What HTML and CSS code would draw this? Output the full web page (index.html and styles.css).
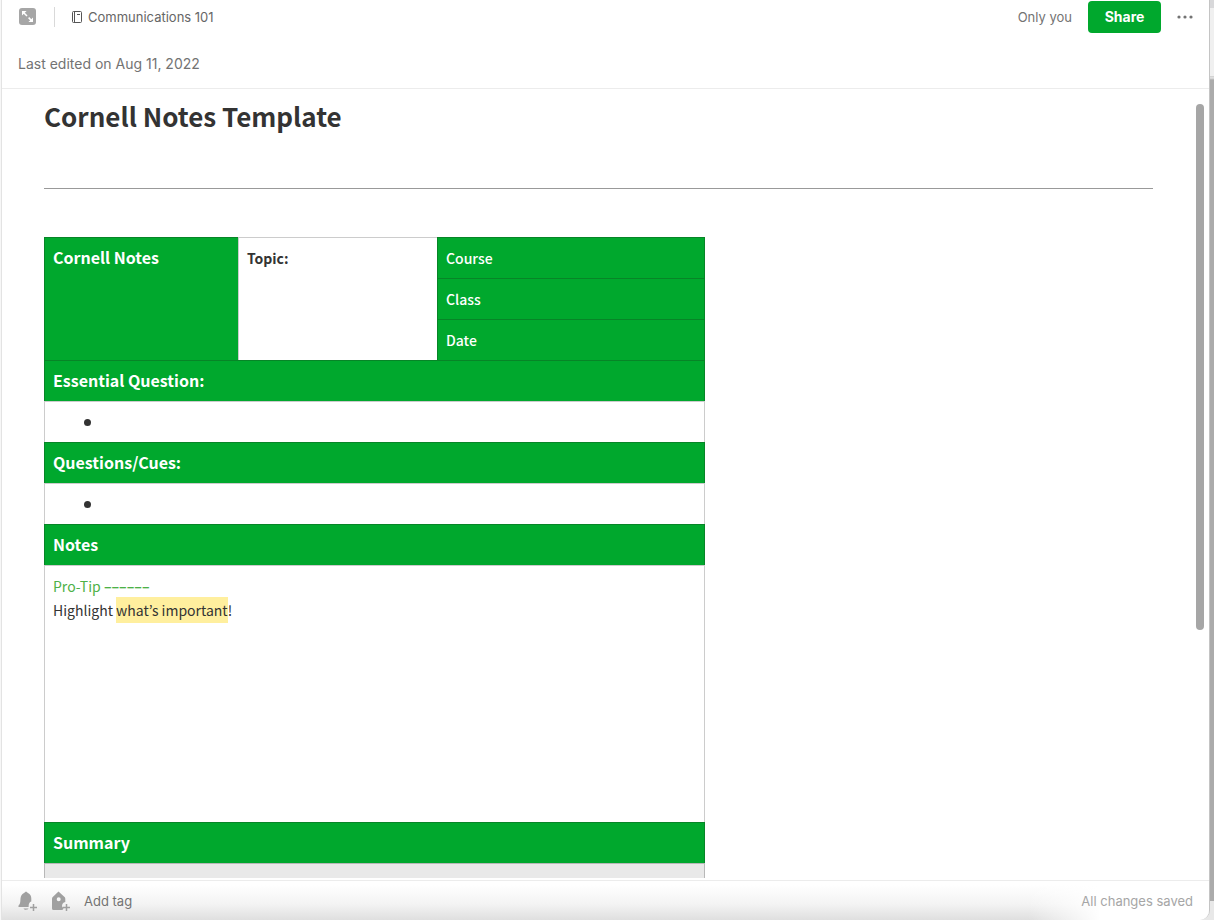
FILE: index.html
```html
<!DOCTYPE html>
<html lang="en">
  <head>
    <meta charset="UTF-8" />
    <meta name="viewport" content="width=device-width, initial-scale=1.0" />
    <title>Cornell Notes Template</title>
    <link rel="stylesheet" href="styles.css">
  </head>
  <body>
    <div class="note-window">
      <header class="topbar">
        <button class="icon-btn" aria-label="Expand note">
          <svg width="17" height="18" viewBox="0 0 17 18">
            <rect width="17" height="17" rx="3" fill="#a6a6a6" />
            <path d="M3 3h4.6L3 7.6z M14 14H9.4L14 9.4z" fill="#fff" />
            <path d="M4.5 4.5l3.5 3.5M9.6 9.6l3 3" stroke="#fff" stroke-width="1.5" />
          </svg>
        </button>
        <span class="divider"></span>
        <a class="notebook" href="#">
          <svg width="11" height="12" viewBox="0 0 11 12" fill="none" stroke="#555">
            <rect x="0.5" y="0.5" width="9" height="11" rx="1" />
            <path d="M2.5 0.5v11M5 3.5h3" />
          </svg>
          Communications 101
        </a>
        <span class="shared">Only you</span>
        <button class="share-btn">Share</button>
        <button class="icon-btn" aria-label="More actions">
          <svg width="16" height="4" viewBox="0 0 16 4" fill="#737373">
            <circle cx="2" cy="2" r="1.6" />
            <circle cx="8" cy="2" r="1.6" />
            <circle cx="14" cy="2" r="1.6" />
          </svg>
        </button>
      </header>

      <div class="edited">Last edited on Aug 11, 2022</div>

      <div class="editor">
        <main class="note">
          <h1>Cornell Notes Template</h1>
          <hr />
          <table>
            <colgroup>
              <col class="col-title" />
              <col class="col-topic" />
              <col class="col-info" />
            </colgroup>
            <tr>
              <th rowspan="3">Cornell Notes</th>
              <td rowspan="3" class="topic">Topic:</td>
              <td class="green last">Course</td>
            </tr>
            <tr>
              <td class="green last">Class</td>
            </tr>
            <tr>
              <td class="green last">Date</td>
            </tr>
            <tr>
              <th colspan="3" class="last">Essential Question:</th>
            </tr>
            <tr>
              <td colspan="3" class="last"><ul><li></li></ul></td>
            </tr>
            <tr>
              <th colspan="3" class="last">Questions/Cues:</th>
            </tr>
            <tr>
              <td colspan="3" class="last"><ul><li></li></ul></td>
            </tr>
            <tr>
              <th colspan="3" class="last">Notes</th>
            </tr>
            <tr>
              <td colspan="3" class="last notes-cell">
                <p class="tip">Pro-Tip <b>––––––</b></p>
                <p>Highlight <mark>what’s important</mark>!</p>
              </td>
            </tr>
            <tr>
              <th colspan="3" class="last">Summary</th>
            </tr>
            <tr>
              <td colspan="3" class="last summary-cell"></td>
            </tr>
          </table>
        </main>
        <div class="scrollbar"><div class="thumb"></div></div>
      </div>

      <footer class="bottombar">
        <button class="icon-btn" aria-label="Add reminder">
          <svg width="20" height="20" viewBox="0 0 20 20" fill="#a0a0a0">
            <path d="M8 0.5L10 2C12.3 3 13.3 5 13.3 7.5V10.5C11.4 11 10.6 12.5 10.6 16H0.6C0.2 15 0.6 14.2 1.4 13.4C2.5 12 2.3 10 2.5 7.5C2.8 5 3.7 3 6 2z" />
            <path d="M5.5 17.5h5c-.6 1.4-4.2 1.8-5 0z" />
            <path d="M15.5 13v7M12 16.5h7" stroke="#a0a0a0" stroke-width="1.5" />
          </svg>
        </button>
        <button class="icon-btn" aria-label="Tags">
          <svg width="20" height="20" viewBox="0 0 20 20" fill="#a0a0a0">
            <path fill-rule="evenodd" d="M7.5 0.5L13.8 6.3Q14.3 7 14.3 8V11C12 11.5 11 13 11 15.2L12.5 17.4Q12 19 10.5 19H2.5Q1 19 1 17.5V8Q1 7 1.5 6.3zM7.7 6.2a2 2 0 1 0 0 4a2 2 0 1 0 0-4z" />
            <path d="M15.5 13v7M12 16.5h7" stroke="#a0a0a0" stroke-width="1.5" />
          </svg>
        </button>
        <button class="add-tag">Add tag</button>
        <span class="status">All changes saved</span>
      </footer>
    </div>
  </body>
</html>
```
FILE: styles.css
```css
* {
  margin: 0;
  padding: 0;
  box-sizing: border-box;
}

body {
  font-family: Inter, "Liberation Sans", sans-serif;
  font-size: 13px;
  color: #737373;
  height: 100vh;
  padding: 0 4px 0 1px;
  overflow: hidden;
  background: linear-gradient(
    #d8d8da 8px,
    #f0f0f0 8px,
    #f0f0f0 76px,
    #cccccc 76px,
    #e4e4e4 78px,
    #ababab 80px,
    #ababab calc(100% - 19px),
    #e8e8e8 calc(100% - 19px)
  );
  box-shadow: inset 1px 0 #f7f7f7;
}

button {
  font: inherit;
  color: inherit;
  border: none;
  background: none;
  cursor: pointer;
}

.note-window {
  height: 100%;
  display: flex;
  flex-direction: column;
  background-color: #fff;
  border-left: 1px solid #e3e3e3;
  border-right: 1px solid #c4c4c4;
  border-bottom-right-radius: 10px;
  overflow: hidden;
}

.topbar {
  height: 34px;
  display: flex;
  align-items: center;
  padding: 0 16px 0 17px;
}

.icon-btn {
  display: flex;
}

.divider {
  width: 1px;
  height: 20px;
  margin: 0 17px 0 18px;
  background-color: #d9d9d9;
}

.notebook {
  display: flex;
  align-items: center;
  gap: 5px;
  color: #666;
  text-decoration: none;
}

.shared {
  margin-left: auto;
}

.share-btn {
  min-width: 73px;
  height: 32px;
  padding: 0 16px 2px;
  margin: 0 16px;
  font-size: 14px;
  font-weight: 700;
  color: #fff;
  background-color: #00a82d;
  border-radius: 4px;
}

.edited {
  height: 55px;
  padding: 20px 16px;
  font-size: 14px;
  line-height: 20px;
  border-bottom: 1px solid #ececec;
}

.editor {
  flex: 1;
  min-height: 0;
  display: flex;
  margin-bottom: 2px;
}

.note {
  flex: 1;
  padding: 0 43px 0 42px;
  overflow: hidden;
  font-family: "Noto Sans CJK KR", sans-serif;
  font-size: 14px;
  line-height: 24px;
  color: #333;
}

h1 {
  font-size: 26px;
  line-height: 40px;
  padding-top: 7px;
}

hr {
  border: none;
  border-top: 1px solid #999;
  margin: 52px 0 48px;
}

table {
  width: 661px;
  table-layout: fixed;
  border-spacing: 0;
}

.col-title {
  width: 194px;
}

.col-topic {
  width: 199px;
}

th,
td {
  height: 41px;
  padding: 8px;
  text-align: left;
  vertical-align: top;
  border: 1px solid #ccc;
  border-width: 1px 0 0 1px;
}

th,
.green {
  color: #fff;
  background-color: #00a82d;
  border-color: #078527;
}

th {
  font-size: 16px;
  padding-top: 7px;
}

.green {
  font-weight: 500;
}

.last {
  border-right-width: 1px;
}

.topic {
  font-weight: 700;
}

ul {
  padding-left: 52px;
  font-size: 18px;
}

.notes-cell {
  height: 257px;
}

.tip {
  color: #4db147;
}

mark {
  padding: 3px 0;
  color: inherit;
  background-color: #ffef9e;
}

.summary-cell {
  background-color: #e9e9e9;
  border-color: #b8b8b8;
}

.scrollbar {
  width: 13px;
  padding-top: 15px;
}

.thumb {
  width: 8px;
  height: 68%;
  border-radius: 4px;
  background-color: #a6a6a6;
}

.bottombar {
  height: 40px;
  display: flex;
  align-items: center;
  gap: 13px;
  padding: 0 16px;
  border-top: 1px solid #ececec;
  background: linear-gradient(to right, transparent 85%, #fff 91%),
    linear-gradient(#fff 10%, #f3f3f3 60%, #dfdfdf);
}

.status {
  margin-left: auto;
  color: #a6a6a6;
}
```
